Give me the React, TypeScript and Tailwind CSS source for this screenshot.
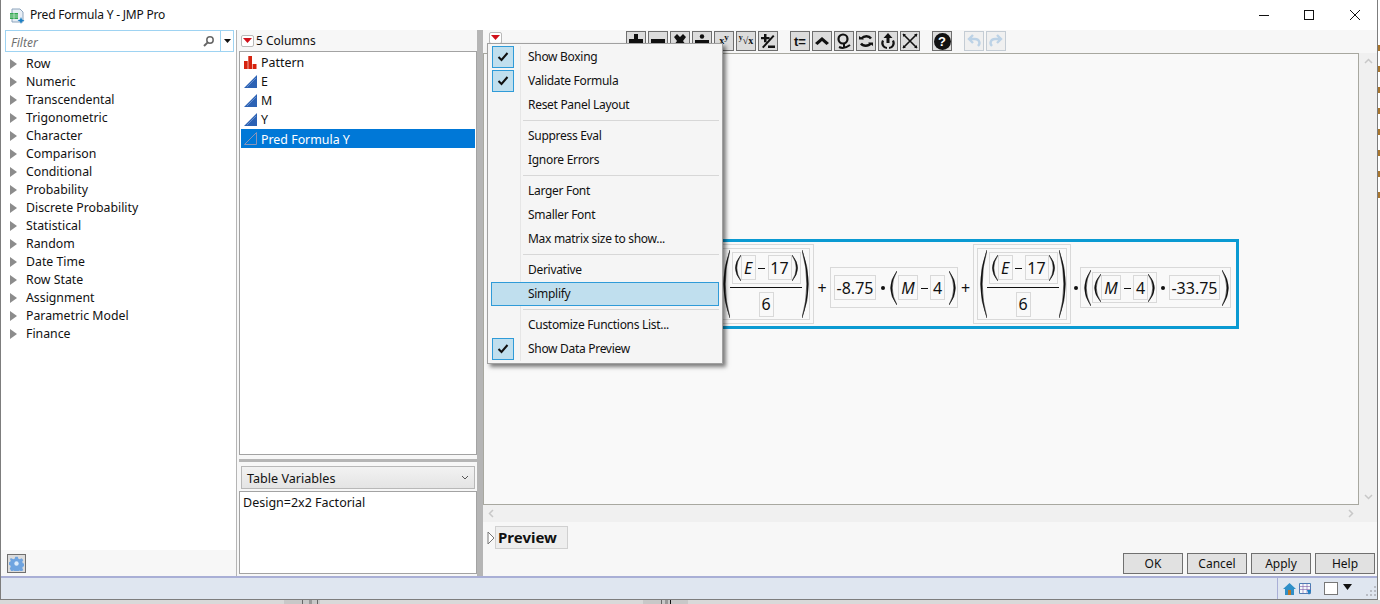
import type { ReactNode } from "react";

const functionGroups = [
  "Row", "Numeric", "Transcendental", "Trigonometric", "Character", "Comparison", "Conditional", "Probability",
  "Discrete Probability", "Statistical", "Random", "Date Time", "Row State", "Assignment", "Parametric Model", "Finance",
];

const menuGroups = [
  [
    { label: "Show Boxing", checked: true },
    { label: "Validate Formula", checked: true },
    { label: "Reset Panel Layout" },
  ],
  [{ label: "Suppress Eval" }, { label: "Ignore Errors" }],
  [{ label: "Larger Font" }, { label: "Smaller Font" }, { label: "Max matrix size to show..." }],
  [{ label: "Derivative" }, { label: "Simplify", active: true }],
  [{ label: "Customize Functions List..." }, { label: "Show Data Preview", checked: true }],
];

function RedMenuButton() {
  return (
    <div className="flex h-[12px] w-[13px] items-start justify-center rounded-[2px] border border-[#b9b9b9] bg-white pt-[2px]">
      <svg width="9" height="5" viewBox="0 0 9 5"><path d="M0 0h9L4.5 5z" fill="#d0101a" /></svg>
    </div>
  );
}

function ContinuousIcon({ muted }: { muted?: boolean }) {
  return (
    <svg width="13" height="13" viewBox="0 0 13 13" className="shrink-0">
      {muted ? (
        <path d="M0.5 12.5L12.5 0.5V12.5Z" fill="none" stroke="#8a94b8" />
      ) : (
        <>
          <path d="M0 13L13 0V13Z" fill="#2c62b4" />
          <path d="M3 12L12 3" stroke="#7fa4dc" strokeWidth="0.7" />
        </>
      )}
    </svg>
  );
}

function BarsIcon() {
  return (
    <svg width="13" height="13" viewBox="0 0 13 13" className="shrink-0">
      <path d="M0 5h3.700v8H0zM4.300 0H8v13H4.300zM8.600 8H12.500v5H8.600z" fill="#d6230f" />
    </svg>
  );
}

function ToolButton({ children, disabled }: { children: ReactNode; disabled?: boolean }) {
  return (
    <div
      className={`flex h-[20px] w-[20px] items-center justify-center overflow-hidden border ${
        disabled ? "border-[#c4ccd4] bg-[#f0f0f0]" : "border-[#6e6e6e] bg-[#dcdcdc]"
      }`}
    >
      {children}
    </div>
  );
}

function Icon({ children }: { children: ReactNode }) {
  return <svg width="18" height="18" viewBox="0 0 18 18">{children}</svg>;
}

function Paren({ h, side, w = 8 }: { h: number; side: "l" | "r"; w?: number }) {
  return (
    <svg width={w} height={h} viewBox={`0 0 ${w} ${h}`} className="shrink-0">
      {side === "l" ? (
        <path d={`M${w} 0Q${-w * 0.6} ${h / 2} ${w} ${h}Q${-w * 0.2} ${h / 2} ${w} 0Z`} fill="#111" stroke="#111" strokeWidth="0.5" />
      ) : (
        <path d={`M0 0Q${w * 1.6} ${h / 2} 0 ${h}Q${w * 1.2} ${h / 2} 0 0Z`} fill="#111" stroke="#111" strokeWidth="0.5" />
      )}
    </svg>
  );
}

function Cell({ children, className }: { children: ReactNode; className: string }) {
  return (
    <div className={`flex h-[25px] items-center justify-center border border-[#d9d9d9] ${className}`}>{children}</div>
  );
}

function Minus({ w = 12 }: { w?: number }) {
  return (
    <div className="flex justify-center" style={{ width: w }}>
      <div className="mt-[2px] h-px w-[7px] bg-[#111]" />
    </div>
  );
}

function Dot({ className }: { className: string }) {
  return (
    <div className={`mt-[7px] flex justify-center ${className}`}>
      <div className="h-[4px] w-[4px] rounded-full bg-[#111]" />
    </div>
  );
}

function Fraction() {
  return (
    <div className="border border-[#d9d9d9] p-[3px]">
      <div className="flex h-[72px] w-[90px] items-center justify-between border border-[#d9d9d9] px-px">
        <Paren h={68} side="l" />
        <div className="flex w-[72px] flex-col items-center">
          <div className="flex h-[32px] w-[69px] items-center justify-between border border-[#d9d9d9] px-[1px]">
            <Paren h={26} side="l" w={7} />
            <Cell className="w-[15px] italic">E</Cell>
            <Minus />
            <Cell className="w-[24px]">17</Cell>
            <Paren h={26} side="r" w={7} />
          </div>
          <div className="mt-[3px] h-px w-[72px] bg-[#111]" />
          <Cell className="mt-[4px] w-[15px]">6</Cell>
        </div>
        <Paren h={68} side="r" />
      </div>
    </div>
  );
}

export default function App() {
  return (
    <div className="flex h-[604px] w-[1380px] flex-col overflow-hidden bg-[#d6d6d6] font-['Noto_Sans',sans-serif] text-[12px] text-[#111]">
      <div className="flex h-[600px] shrink-0">
        <div className="relative flex h-[600px] w-[1378px] shrink-0 flex-col border-x border-b border-[#7d7d7d] bg-[#f7f7f7]">
          {/* title bar */}
          <div className="flex h-[30px] shrink-0 items-center bg-white">
            <svg width="16" height="16" viewBox="0 0 16 16" className="ml-[8px] mt-[1px]">
              <path d="M3 1h8l3 3v10H3z" fill="#e8eef5" stroke="#8da4bc" />
              <path d="M1 5h8v6H1z" fill="#35a853" />
              <path d="M1 7h8M1 9h8M5 5v6" stroke="#d8f0dc" strokeWidth="0.7" />
              <path d="M12 9l1 2.500 2.500 1-2.500 1-1 2.500-1-2.500-2.500-1 2.500-1z" fill="#1b7fc4" />
            </svg>
            <span className="ml-[5px] tracking-[-0.2px]">Pred Formula Y - JMP Pro</span>
            <div className="ml-auto flex items-center">
              <svg width="12" height="12" viewBox="0 0 12 12"><path d="M1 6.500h10" stroke="#111" /></svg>
              <svg width="12" height="12" viewBox="0 0 12 12" className="ml-[33px]"><rect x="1.500" y="1.500" width="9" height="9" fill="none" stroke="#111" /></svg>
              <svg width="12" height="12" viewBox="0 0 12 12" className="ml-[34px] mr-[16px]"><path d="M1 1l10 10M11 1L1 11" stroke="#111" /></svg>
            </div>
          </div>

          <div className="flex min-h-0 flex-1">
            {/* function list */}
            <div className="flex w-[235px] shrink-0 flex-col">
              <div className="flex-1 bg-white pl-[4px] text-[12.3px]">
                <div className="flex h-[22px] w-[229px] items-center border border-[#9ed3f2]">
                  <span className="ml-[5px] mt-[4px] text-[12px] italic text-[#6f6f6f]">Filter</span>
                  <svg width="13" height="13" viewBox="0 0 13 13" className="ml-auto mr-[5px]">
                    <circle cx="8" cy="5" r="3.200" fill="none" stroke="#666" strokeWidth="1.500" />
                    <path d="M5.700 7.400L2 11" stroke="#666" strokeWidth="2" />
                  </svg>
                  <div className="flex h-full w-[13px] items-center justify-center border-l border-[#9ed3f2]">
                    <svg width="7" height="4" viewBox="0 0 7 4"><path d="M0 0h7L3.500 4z" fill="#111" /></svg>
                  </div>
                </div>
                <div className="pt-[3px]">
                  {functionGroups.map((group) => (
                    <div key={group} className="flex h-[18px] items-center">
                      <svg width="7" height="10" viewBox="0 0 7 10" className="ml-[5px]"><path d="M0 0l7 5-7 5z" fill="#8c8c8c" /></svg>
                      <span className="ml-[9px]">{group}</span>
                    </div>
                  ))}
                </div>
              </div>
              <div className="flex h-[26px] items-center pl-[6px]">
                <div className="flex h-[19px] w-[19px] items-center justify-center border border-[#707070] bg-[#dcdcdc]">
                  <svg width="15" height="15" viewBox="0 0 24 24">
                    <path
                      d="M10 1h4l1 3.200 2.200 1 3-1.600 2.600 2.800-1.600 2.800.9 2.300 3 1v3.600l-3 1-.9 2.200 1.600 2.900-2.800 2.700-2.900-1.600-2.200.9-1 3h-3.800l-1-3-2.200-.9-2.900 1.600L1.200 20l1.600-2.900-.9-2.200-3-1v-3.600l3-1 .9-2.300-1.600-2.800L3.800 3.600l3 1.600 2.200-1z"
                      fill="#6fa4e0"
                    />
                    <circle cx="12" cy="12" r="3.500" fill="#dcebfb" />
                  </svg>
                </div>
              </div>
            </div>

            <div className="w-[3px] shrink-0 border-l border-[#b5b5b5]" />

            {/* columns */}
            <div className="flex w-[238px] shrink-0 flex-col">
              <div className="flex h-[21px] items-center pl-[2px]">
                <RedMenuButton />
                <span className="ml-[2px]">5 Columns</span>
              </div>
              <div className="h-[404px] border border-[#a3a3a3] bg-white p-px text-[12.4px]">
                <div className="flex h-[19px] items-center pl-[3px]"><BarsIcon /><span className="ml-[4px] mt-[2px]">Pattern</span></div>
                {["E", "M", "Y"].map((col) => (
                  <div key={col} className="flex h-[19px] items-center pl-[3px]"><ContinuousIcon /><span className="ml-[4px] mt-[2px]">{col}</span></div>
                ))}
                <div className="flex h-[19px] items-center bg-[#0078d7] pl-[3px] text-white"><ContinuousIcon muted /><span className="ml-[4px] mt-[4px]">Pred Formula Y</span></div>
              </div>
              <div className="mt-[4px] h-[3px] bg-[#b5b5b5]" />
              <div className="mx-[2px] mt-[4px] flex h-[23px] items-center justify-between border border-[#b8b8b8] bg-gradient-to-b from-[#f2f2f2] to-[#e4e4e4] pl-[5px] pr-[5px] text-[12.6px]">
                <span className="mt-[3px]">Table Variables</span>
                <svg width="8" height="5" viewBox="0 0 8 5"><path d="M1 1l3 3 3-3" fill="none" stroke="#555" /></svg>
              </div>
              <div className="mb-[2px] mt-[2px] flex-1 border border-[#a3a3a3] bg-white px-[3px] pt-[2px] text-[12.5px]">Design=2x2 Factorial</div>
            </div>

            <div className="w-[6px] shrink-0 bg-[#b5b5b5]" />

            {/* formula editor */}
            <div className="flex min-w-0 flex-1 flex-col">
              <div className="flex h-[23px] shrink-0 items-start pt-px">
                <div className="ml-[6px] mt-[1px]"><RedMenuButton /></div>
                <div className="ml-[124px] flex gap-[2px]">
                  <ToolButton><Icon><path d="M7 2h4v5h5v4h-5v5H7v-5H2V7h5z" fill="#111" /></Icon></ToolButton>
                  <ToolButton><Icon><path d="M2 7h14v4H2z" fill="#111" /></Icon></ToolButton>
                  <ToolButton><Icon><path d="M3 5l3-3 3 3 3-3 3 3-3 4 3 4-3 3-3-3-3 3-3-3 3-4z" fill="#111" /></Icon></ToolButton>
                  <ToolButton><Icon><path d="M2 8h14v3H2z" fill="#111" /><circle cx="9" cy="4.500" r="2.200" fill="#111" /><circle cx="9" cy="14.500" r="2.200" fill="#111" /></Icon></ToolButton>
                  <ToolButton><span className="font-['Liberation_Serif',serif] text-[10px] font-bold leading-none">x<sup className="text-[9px]">y</sup></span></ToolButton>
                  <ToolButton><span className="font-['Liberation_Serif',serif] text-[10px] font-bold leading-none"><sup className="text-[8px]">y</sup>√x</span></ToolButton>
                  <ToolButton><Icon><path d="M5 2h2.500v3H10.500v2.300H7.500v3H5v-3H2V5h3zM3 15L14 3l1.500 1.300L4.500 16.300zM9 13.500h7V16H9z" fill="#111" /></Icon></ToolButton>
                </div>
                <div className="ml-[12px] flex gap-[2px]">
                  <ToolButton><span className="font-['Liberation_Sans',sans-serif] text-[13px] font-bold leading-none">t=</span></ToolButton>
                  <ToolButton><Icon><path d="M2 11l7-6 7 6-2.500 2L9 9l-4.500 4z" fill="#111" /></Icon></ToolButton>
                  <ToolButton><Icon><circle cx="8" cy="7" r="4.500" fill="none" stroke="#111" strokeWidth="2.200" /><path d="M9 11v4M4 15c3 1.500 7 1 11-2" fill="none" stroke="#111" strokeWidth="2" /></Icon></ToolButton>
                  <ToolButton><Icon><path d="M14 6.500C12 3.500 7 3.500 4.500 6.500M4 11.500c2 3 7.500 3 9.500 0" fill="none" stroke="#111" strokeWidth="2.400" /><path d="M2 4l5 3.500H2zM16 14l-5-3.500h5z" fill="#111" /></Icon></ToolButton>
                  <ToolButton><Icon><path d="M9 1l4.500 5h-3v5h-3V6h-3z" fill="#111" /><path d="M4 8.500c-2 4 1 7.500 4 7.500M14 8.500c2 4-1 7.500-4 7.500" fill="none" stroke="#111" strokeWidth="2.200" /></Icon></ToolButton>
                  <ToolButton><Icon><path d="M2 2l14 14M16 2L2 16" stroke="#111" strokeWidth="1.600" /><path d="M2 2h3L2 5zM16 16h-3l3-3zM16 2v3l-3-3zM2 16v-3l3 3z" fill="#111" /></Icon></ToolButton>
                </div>
                <div className="ml-[12px]">
                  <ToolButton>
                    <div className="flex h-[17px] w-[17px] items-center justify-center rounded-full bg-[#111] font-['Liberation_Sans',sans-serif] text-[13px] font-bold leading-none text-white">?</div>
                  </ToolButton>
                </div>
                <div className="ml-[12px] flex gap-[2px]">
                  <ToolButton disabled><Icon><path d="M13 14c3-3 1-7-3-7H5M8 3L4 7l4 4" fill="none" stroke="#bcd2e6" strokeWidth="2.400" /></Icon></ToolButton>
                  <ToolButton disabled><Icon><path d="M5 14c-3-3-1-7 3-7h5M10 3l4 4-4 4" fill="none" stroke="#bcd2e6" strokeWidth="2.400" /></Icon></ToolButton>
                </div>
              </div>

              <div className="flex h-[452px] shrink-0">
                <div className="flex min-w-0 flex-1 items-start justify-end overflow-hidden border border-[#a8a8a0] bg-[#f9f9f9] pr-[119px] pt-[185px] text-[16px]">
                  <div className="flex h-[90px] shrink-0 items-center border-[3px] border-[#0a9ad2] pl-[2px] pr-[5px]">
                    <Fraction />
                    <div className="mt-[7px] w-[16px] text-center">+</div>
                    <div className="mt-[7px] flex h-[41px] w-[128px] items-center border border-[#d9d9d9] pl-[3px]">
                      <Cell className="w-[42px]">-8.75</Cell>
                      <div className="flex w-[13px] justify-center"><div className="h-[4px] w-[4px] rounded-full bg-[#111]" /></div>
                      <Paren h={34} side="l" />
                      <Cell className="ml-px w-[20px] italic">M</Cell>
                      <Minus />
                      <Cell className="w-[15px]">4</Cell>
                      <div className="ml-[4px]"><Paren h={34} side="r" /></div>
                    </div>
                    <div className="mt-[7px] w-[15px] text-center">+</div>
                    <Fraction />
                    <Dot className="w-[9px]" />
                    <div className="mt-[7px] flex h-[41px] w-[151px] items-center border border-[#d9d9d9] pl-[2px]">
                      <Paren h={36} side="l" />
                      <div className="ml-px flex h-[31px] w-[65px] items-center border border-[#d9d9d9]">
                        <Paren h={28} side="l" />
                        <Cell className="w-[20px] italic">M</Cell>
                        <Minus />
                        <Cell className="w-[15px]">4</Cell>
                        <Paren h={28} side="r" />
                      </div>
                      <div className="flex w-[12px] justify-center"><div className="h-[4px] w-[4px] rounded-full bg-[#111]" /></div>
                      <Cell className="w-[51px]">-33.75</Cell>
                      <div className="ml-[2px]"><Paren h={36} side="r" /></div>
                    </div>
                  </div>
                </div>
                <div className="flex w-[18px] shrink-0 flex-col items-center justify-between bg-[#f0f0f0] py-[5px]">
                  <svg width="9" height="6" viewBox="0 0 9 6"><path d="M1 5l3.500-3.500L8 5" fill="none" stroke="#c8c8c8" strokeWidth="1.500" /></svg>
                  <svg width="9" height="6" viewBox="0 0 9 6"><path d="M1 1l3.500 3.500L8 1" fill="none" stroke="#c8c8c8" strokeWidth="1.500" /></svg>
                </div>
              </div>

              <div className="flex h-[17px] shrink-0 items-center justify-between bg-[#f0f0f0] pl-[5px] pr-[23px]">
                <svg width="6" height="9" viewBox="0 0 6 9"><path d="M5 1L1.500 4.500 5 8" fill="none" stroke="#c8c8c8" strokeWidth="1.500" /></svg>
                <svg width="6" height="9" viewBox="0 0 6 9"><path d="M1 1l3.500 3.500L1 8" fill="none" stroke="#c8c8c8" strokeWidth="1.500" /></svg>
              </div>

              <div className="flex h-[31px] shrink-0 items-center pl-[4px]">
                <svg width="8" height="14" viewBox="0 0 8 14"><path d="M1 1l6 6-6 6z" fill="#fff" stroke="#777" /></svg>
                <div className="flex h-[23px] w-[73px] items-center border border-[#d0d0d0] bg-[#eeeeee] pl-[2px] text-[15px] font-bold">Preview</div>
              </div>

              <div className="flex justify-end gap-[4px] pr-[2px]">
                {["OK", "Cancel", "Apply", "Help"].map((label) => (
                  <div key={label} className="flex h-[21px] w-[60px] items-center justify-center border border-[#707070] bg-[#e1e1e1] pt-px">{label}</div>
                ))}
              </div>
            </div>
          </div>

          {/* status bar */}
          <div className="flex h-[23px] shrink-0 items-center border-t-2 border-[#a9afd6] bg-[#dfe6f0]">
            <div className="ml-auto flex h-full items-center border-l border-[#a9afd6] pl-[5px]">
              <svg width="13" height="13" viewBox="0 0 13 13">
                <path d="M6.500 1L0 7h2v6h9V7h2z" fill="#2f8fc8" />
                <path d="M5 8h3v5H5z" fill="#b9772a" />
              </svg>
              <svg width="13" height="12" viewBox="0 0 13 12" className="ml-[3px]">
                <path d="M0.500 0.500h11v10h-11z" fill="#f4f8fc" stroke="#4a7fb5" />
                <path d="M0 3.500h12M0 6.500h12M4 0v11M8 0v11" stroke="#7c5ea8" strokeWidth="0.600" />
                <path d="M8 7l4 0-2 5z" fill="#1b7fc4" />
              </svg>
              <div className="ml-[12px] h-[13px] w-[14px] border border-[#777] bg-white" />
              <svg width="9" height="6" viewBox="0 0 9 6" className="mb-[3px] ml-[5px]"><path d="M0 0h9L4.500 6z" fill="#111" /></svg>
              <svg width="12" height="12" viewBox="0 0 12 12" className="ml-[12px] mr-[1px] mt-[7px]">
                <path d="M10 0h2v2h-2zM6 4h2v2H6zM10 4h2v2h-2zM2 8h2v2H2zM6 8h2v2H6zM10 8h2v2h-2z" fill="#b8bcc4" />
              </svg>
            </div>
          </div>

          {/* drop-down menu */}
          <div className="absolute left-[486px] top-[43px] w-[236px] border border-[#a0a0a0] bg-[#f5f5f5] px-[3px] pb-[2px] pt-px shadow-[3px_3px_4px_rgba(0,0,0,0.5)]">
            <div className="absolute bottom-[2px] left-[32px] top-[2px] w-px bg-[#e6e6e6]" />
            {menuGroups.map((group, i) => (
              <div key={i}>
                {i > 0 && (
                  <div className="flex h-[7px] items-center pl-[32px]"><div className="h-px w-full bg-[#d7d7d7]" /></div>
                )}
                {group.map((item) => (
                  <div
                    key={item.label}
                    className={`relative flex h-[24px] items-center tracking-[-0.3px] ${item.active ? "border border-[#2f9bd8] bg-[#c0dfee]" : ""}`}
                  >
                    {item.checked && (
                      <div className="absolute left-px top-px flex h-[22px] w-[22px] items-center justify-center border border-[#2f9bd8] bg-[#c0dfee]">
                        <svg width="12" height="10" viewBox="0 0 12 10"><path d="M1.500 5l3 3 6-7" fill="none" stroke="#111" strokeWidth="2" /></svg>
                      </div>
                    )}
                    <span className={item.active ? "pl-[36px]" : "pl-[37px]"}>{item.label}</span>
                  </div>
                ))}
              </div>
            ))}
          </div>
        </div>

        {/* whatever sits behind the dialog, right edge */}
        <div className="flex w-[2px] flex-col gap-[15px] bg-white pt-[45px]">
          {[0, 1, 2, 3, 4, 5, 6, 7].map((n) => (
            <div key={n} className="h-[6px] bg-[#a9762e]" />
          ))}
        </div>
      </div>

      {/* window behind, bottom edge */}
      <div className="flex h-[4px] shrink-0 bg-[#d9d9d9]">
        <div className="ml-[284px] flex h-full w-[36px] bg-[#c8c8c8]">
          <div className="ml-[18px] h-full w-px bg-[#666]" />
          <div className="ml-[6px] h-full w-[3px] bg-[#999]" />
          <div className="ml-[5px] h-full w-px bg-[#666]" />
        </div>
        <div className="ml-[323px] flex h-full w-[45px] bg-[#c8c8c8]">
          <div className="ml-[18px] h-full w-px bg-[#666]" />
          <div className="ml-[3px] h-full w-[3px] bg-[#999]" />
          <div className="ml-[2px] h-full w-px bg-[#111]" />
        </div>
      </div>
    </div>
  );
}
